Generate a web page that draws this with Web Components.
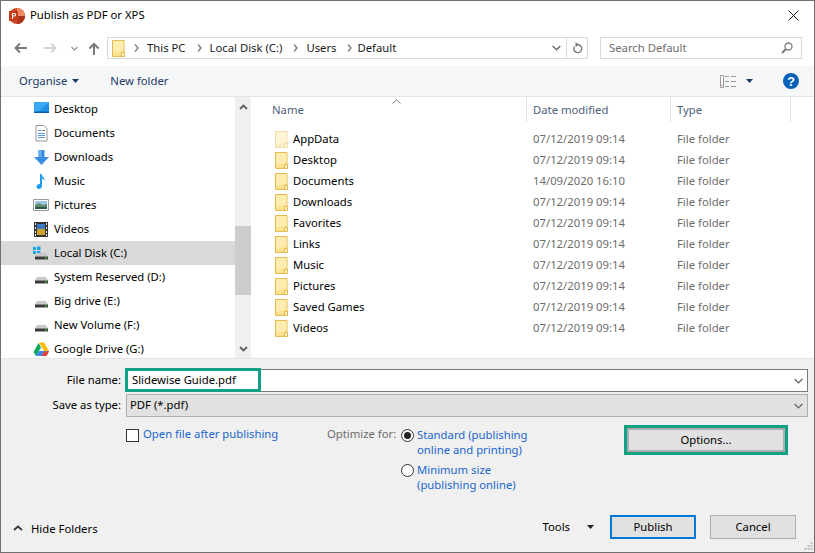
<!DOCTYPE html>
<html>
<head>
<meta charset="utf-8">
<title>Publish as PDF or XPS</title>
<style>
  html, body { margin: 0; padding: 0; background: #fff; }
  body { font: 11.3px "Noto Sans", "Liberation Sans", sans-serif; color: #000; }
</style>
</head>
<body>
<publish-dialog></publish-dialog>

<script>
// small folder used by the address bar and the file list
const folderIcon = (op = 1) => `
  <svg width="13" height="17" viewBox="0 0 13 17" style="opacity:${op}">
    <path d="M.5.500h11.500v15.900H.5z" fill="#fde28f" stroke="#e2b84f"/>
    <path d="M1 1h10.500v9.500L1 13z" fill="#ffedb0"/>
    <path d="M9.500 12.500h3v4h-3z" fill="#fff3c8" stroke="#e2b84f"/>
  </svg>`;

const driveBase = `
  <path d="M2 11.500 4 8h9l2 3.500z" fill="#c9c9c9"/>
  <path d="M2 11h13v3.500H2z" fill="#3a3a3a"/>
  <path d="M2 11h13v1H2z" fill="#8a8a8a"/>
  <path d="M12 12.500h2v1h-2z" fill="#5ee04a"/>`;

const treeIcons = {
  desktop: `<path d="M1 1h15v11H1z" fill="#1e90e8"/><path d="M1 1h15L4 12H1z" fill="#3aa8f2"/><path d="M1 10.500h15V12H1z" fill="#0a5da8"/>`,
  documents: `<path d="M3 .5h8l3 3v12.500H3z" fill="#fbfbfb" stroke="#9a9a9a"/><path d="M5 5h3v1H5zM5 8h7v1H5zM5 10h7v1H5zM5 12h7v1H5z" fill="#5a9bd5"/><path d="M9 5h3v1H9z" fill="#7a7a7a"/>`,
  downloads: `<path d="M5.500 1h6v7H16l-7.500 8L1 8h4.500z" fill="#3b8fe0"/><path d="M5.500 1h3v7h-3z" fill="#69aef0"/>`,
  music: `<path d="M7 1h1.600c.4 3 3.400 3.600 3.400 7-.8-1.600-2-2.300-3-2.500V13c0 1.800-1.600 3-3.200 3S3.500 15 3.500 13.500 5 11 6.500 11c.2 0 .4 0 .5.100z" fill="#1e9cf0"/>`,
  pictures: `<path d="M.5 2.500h15v11H.5z" fill="#fff" stroke="#9a9a9a"/><path d="M2 4h12v4H2z" fill="#9cc7e8"/><path d="M2 8l4-2 4 2 4-1v5H2z" fill="#5f8a6e"/><path d="M2 10h12v2H2z" fill="#2f5a48"/>`,
  videos: `<path d="M1 1h14v15H1z" fill="#333"/><path d="M4 3h8v11H4z" fill="#3f77c4"/><path d="M4 8h8v6H4z" fill="#c9a32e"/><path d="M2 2h1v2H2zM2 6h1v2H2zM2 10h1v2H2zM2 13h1v2H2zM13 2h1v2h-1zM13 6h1v2h-1zM13 10h1v2h-1zM13 13h1v2h-1z" fill="#eee"/>`,
  system: `<path d="M0 2h3v3H0zM4 1.500h3.500V5H4zM0 6h3v3H0zM4 6h3.500v3H4z" fill="#1fa4ea"/>${driveBase}`,
  drive: driveBase,
  gdrive: `<path d="M6 1.500h5l5 8.500h-5z" fill="#fbbc04"/><path d="M5.500 10H16l-2.500 5H3z" fill="#4285f4"/><path d="M.5 11 5.600 2 8 6.500 3 15z" fill="#0ea55c"/><path d="M13.500 15 16 10.500h-5L8.500 15z" fill="#ea4335"/>`
};

class PublishDialog extends HTMLElement {
  constructor() {
    super();
    this.attachShadow({ mode: 'open' });
  }
  connectedCallback() {
    this.shadowRoot.innerHTML = `
      <style>
        :host {
          display: flex;
          flex-direction: column;
          box-sizing: border-box;
          width: 815px;
          height: 553px;
          border: 1px solid #707070;
          background: #fff;
          overflow: hidden;
        }
        .main { display: flex; height: 261px; }
      </style>
      <dialog-title></dialog-title>
      <dialog-nav></dialog-nav>
      <dialog-toolbar></dialog-toolbar>
      <div class="main">
        <folder-tree></folder-tree>
        <file-list></file-list>
      </div>
      <publish-form></publish-form>
    `;
  }
}

class DialogTitle extends HTMLElement {
  constructor() {
    super();
    this.attachShadow({ mode: 'open' });
  }
  connectedCallback() {
    this.shadowRoot.innerHTML = `
      <style>
        :host { display: flex; align-items: center; height: 29px; padding: 0 15px 0 8px; }
        span { margin: 0 0 2px 5px; flex: 1; color: #000; }
        svg { display: block; }
      </style>
      <svg width="16" height="16" viewBox="0 0 16 16">
        <circle cx="8" cy="8" r="8" fill="#d2472a"/>
        <path d="M8 0a8 8 0 0 1 8 8H8z" fill="#ef8b65"/>
        <path d="M8 16a8 8 0 0 0 8-8H8z" fill="#a8321a"/>
        <path d="M0 3h9v10H0z" fill="#c43e1c"/>
        <path d="M3 5h2.400a1.700 1.700 0 0 1 0 3.400H4V11H3zM4 6v1.500h1.300a.75.75 0 0 0 0-1.500z" fill="#fff"/>
      </svg>
      <span>Publish as PDF or XPS</span>
      <svg width="11" height="11" viewBox="0 0 11 11"><path d="M.5.500l10 10M10.500.5l-10 10" stroke="#111" fill="none"/></svg>
    `;
  }
}

class DialogNav extends HTMLElement {
  constructor() {
    super();
    this.attachShadow({ mode: 'open' });
  }
  connectedCallback() {
    const sep = (cls = '') => `<svg class="sep ${cls}" width="5" height="8" viewBox="0 0 5 8"><path d="M1 .5 4 4 1 7.500" stroke="#808080" stroke-width="1.400" fill="none"/></svg>`;
    this.shadowRoot.innerHTML = `
      <style>
        :host { display: flex; align-items: center; height: 36px; padding-left: 13px; box-sizing: border-box; }
        svg { display: block; flex: none; }
        span { margin-bottom: 2px; }
        .fwd { margin-left: 17px; }
        .drop { margin-left: 14px; }
        .up { margin-left: 10px; }
        .addr {
          box-sizing: border-box;
          display: flex;
          align-items: center;
          margin-left: 7px;
          width: 481px;
          height: 22px;
          border: 1px solid #d9d9d9;
          padding-left: 4px;
          color: #1a1a1a;
        }
        .addr .sep { margin: 0 8px 0 11px; }
        .addr .sep.first { margin: 0 8px 0 9px; }
        .addr .sep.last { margin: 0 6px 0 10px; }
        .end { margin-left: auto; display: flex; align-items: center; height: 100%; }
        .end .chev { margin-right: 5px; }
        .end .refresh { border-left: 1px solid #d9d9d9; height: 100%; width: 20px; display: flex; align-items: center; justify-content: center; }
        .search {
          box-sizing: border-box;
          display: flex;
          align-items: center;
          justify-content: space-between;
          margin-left: 12px;
          width: 202px;
          height: 22px;
          border: 1px solid #d9d9d9;
          padding: 0 8px;
          color: #6d6d6d;
        }
      </style>
      <svg width="13" height="12" viewBox="0 0 13 12"><path d="M13 6H2M6 1.500 1.500 6 6 10.500" stroke="#7a7a7a" stroke-width="2" fill="none"/></svg>
      <svg class="fwd" width="13" height="12" viewBox="0 0 13 12"><path d="M0 6h11M7 1.500 11.500 6 7 10.500" stroke="#d4d4d4" stroke-width="2" fill="none"/></svg>
      <svg class="drop" width="7" height="5" viewBox="0 0 7 5"><path d="M.5 1 3.500 4 6.500 1" stroke="#9a9a9a" stroke-width="1.300" fill="none"/></svg>
      <svg class="up" width="12" height="13" viewBox="0 0 12 13"><path d="M6 13V2M1.500 6.500 6 2l4.500 4.500" stroke="#7a7a7a" stroke-width="2" fill="none"/></svg>
      <div class="addr">
        ${folderIcon()}
        ${sep('first')}
        <span>This PC</span>${sep()}
        <span>Local Disk (C:)</span>${sep()}
        <span>Users</span>${sep('last')}
        <span>Default</span>
        <div class="end">
          <svg class="chev" width="9" height="6" viewBox="0 0 9 6"><path d="M.7 1 4.500 4.800 8.300 1" stroke="#6a6a6a" stroke-width="1.500" fill="none"/></svg>
          <div class="refresh">
            <svg width="11" height="12" viewBox="0 0 11 12"><path d="M6.500 2.700A4 4 0 1 1 2.300 4.500" stroke="#7a7a7a" stroke-width="1.400" fill="none"/><path d="M3.500 0 7.500 2.700 3.500 5z" fill="#7a7a7a"/></svg>
          </div>
        </div>
      </div>
      <div class="search">
        <span>Search Default</span>
        <svg width="12" height="12" viewBox="0 0 12 12"><circle cx="7.500" cy="4.500" r="3.500" stroke="#7a7a7a" stroke-width="1.300" fill="none"/><path d="M5 7 1 11" stroke="#7a7a7a" stroke-width="2"/></svg>
      </div>
    `;
  }
}

class DialogToolbar extends HTMLElement {
  constructor() {
    super();
    this.attachShadow({ mode: 'open' });
  }
  connectedCallback() {
    this.shadowRoot.innerHTML = `
      <style>
        :host {
          display: flex;
          align-items: center;
          box-sizing: border-box;
          height: 31px;
          background: #f5f6f7;
          border-bottom: 1px solid #e5e5e5;
          padding-left: 18px;
          color: #1c3a66;
        }
        svg { display: block; flex: none; }
        span { margin-bottom: 2px; }
        .arrow { margin-left: 5px; }
        .newf { margin-left: 31px; }
        .view { margin-left: auto; }
        .varrow { margin-left: 10px; }
        .help { margin-left: 30px; margin-right: 15px; }
      </style>
      <span>Organise</span>
      <svg class="arrow" width="7" height="4" viewBox="0 0 7 4"><path d="M0 0h7L3.500 4z" fill="#1c3a66"/></svg>
      <span class="newf">New folder</span>
      <svg class="view" width="16" height="13" viewBox="0 0 16 13">
        <path d="M.5.500h3v12h-3z" fill="#fff" stroke="#9a9a9a"/>
        <path d="M1.500 10h1v1h-1z" fill="#d9483b"/>
        <path d="M5 1.500h4M11 1.500h5M5 6.500h4M11 6.500h5M5 11.500h4M11 11.500h5" stroke="#9a9a9a"/>
      </svg>
      <svg class="varrow" width="7" height="4" viewBox="0 0 7 4"><path d="M0 0h7L3.500 4z" fill="#1c3a66"/></svg>
      <svg class="help" width="16" height="16" viewBox="0 0 16 16">
        <circle cx="8" cy="8" r="8" fill="#0a62b8"/>
        <text x="8" y="12.500" text-anchor="middle" font-family="Liberation Sans, sans-serif" font-weight="700" font-size="12.500" fill="#fff">?</text>
      </svg>
    `;
  }
}

class TreeItem extends HTMLElement {
  constructor() {
    super();
    this.attachShadow({ mode: 'open' });
  }
  connectedCallback() {
    const icon = this.getAttribute('icon');
    this.shadowRoot.innerHTML = `
      <style>
        :host { display: flex; align-items: center; height: 24px; padding-left: 32px; color: #000; }
        :host([selected]) { background: #d9d9d9; }
        svg { display: block; margin-right: 4px; flex: none; }
        slot { display: block; margin-bottom: 2px; }
      </style>
      <svg width="17" height="17" viewBox="0 0 17 17">${treeIcons[icon]}</svg>
      <slot></slot>
    `;
  }
}

class FolderTree extends HTMLElement {
  constructor() {
    super();
    this.attachShadow({ mode: 'open' });
    this.items = [
      ['desktop', 'Desktop'], ['documents', 'Documents'], ['downloads', 'Downloads'],
      ['music', 'Music'], ['pictures', 'Pictures'], ['videos', 'Videos'],
      ['system', 'Local Disk (C:)', true], ['drive', 'System Reserved (D:)'],
      ['drive', 'Big drive (E:)'], ['drive', 'New Volume (F:)'], ['gdrive', 'Google Drive (G:)']
    ];
  }
  connectedCallback() {
    this.shadowRoot.innerHTML = `
      <style>
        :host { display: flex; flex: none; width: 251px; height: 261px; overflow: hidden; }
        .rows { width: 234px; flex: none; overflow: hidden; }
        .bar {
          width: 16px;
          flex: none;
          background: #f0f0f0;
          display: flex;
          flex-direction: column;
          align-items: center;
        }
        .bar svg { display: block; flex: none; }
        .top { margin-top: 7px; }
        .thumb { align-self: stretch; height: 69px; margin-top: 116px; background: #cdcdcd; }
        .bottom { margin-top: 51px; }
      </style>
      <div class="rows">
        ${this.items.map(([icon, label, sel]) => `<tree-item icon="${icon}" ${sel ? 'selected' : ''}>${label}</tree-item>`).join('')}
      </div>
      <div class="bar">
        <svg class="top" width="9" height="6" viewBox="0 0 9 6"><path d="M1 5 4.500 1.500 8 5" stroke="#606060" stroke-width="1.800" fill="none"/></svg>
        <div class="thumb"></div>
        <svg class="bottom" width="9" height="6" viewBox="0 0 9 6"><path d="M1 1 4.500 4.500 8 1" stroke="#606060" stroke-width="1.800" fill="none"/></svg>
      </div>
    `;
  }
}

class FileList extends HTMLElement {
  constructor() {
    super();
    this.attachShadow({ mode: 'open' });
    this.files = [
      ['AppData', '07/12/2019 09:14', true], ['Desktop', '07/12/2019 09:14'],
      ['Documents', '14/09/2020 16:10'], ['Downloads', '07/12/2019 09:14'],
      ['Favorites', '07/12/2019 09:14'], ['Links', '07/12/2019 09:14'],
      ['Music', '07/12/2019 09:14'], ['Pictures', '07/12/2019 09:14'],
      ['Saved Games', '07/12/2019 09:14'], ['Videos', '07/12/2019 09:14']
    ];
  }
  connectedCallback() {
    this.shadowRoot.innerHTML = `
      <style>
        :host { display: block; flex: 1; position: relative; min-width: 0; }
        .cols { display: grid; grid-template-columns: 275px 144px 120px; }
        .head { height: 25px; color: #4c607a; }
        .head > div { height: 25px; padding-top: 5px; box-sizing: border-box; border-right: 1px solid #e5e5e5; padding-left: 20px; }
        .head > div + div { padding-left: 6px; }
        .sort { position: absolute; left: 140px; top: 2px; display: block; }
        .list { padding-top: 7px; }
        .row { height: 21px; align-items: center; color: #6d6d6d; }
        .row > div { display: flex; align-items: center; padding-left: 6px; }
        .row > div:first-child { padding-left: 23px; color: #000; }
        .row span { margin-bottom: 2px; }
        .row svg { display: block; margin-right: 5px; flex: none; }
      </style>
      <svg class="sort" width="9" height="5" viewBox="0 0 9 5"><path d="M.5 4.500 4.500.8 8.500 4.500" stroke="#808080" fill="none"/></svg>
      <div class="cols head"><div>Name</div><div>Date modified</div><div>Type</div></div>
      <div class="list">
        ${this.files.map(([name, date, dim]) => `
          <div class="cols row">
            <div>${folderIcon(dim ? 0.5 : 1)}<span>${name}</span></div>
            <div><span>${date}</span></div>
            <div><span>File folder</span></div>
          </div>`).join('')}
      </div>
    `;
  }
}

class DialogButton extends HTMLElement {
  constructor() {
    super();
    this.attachShadow({ mode: 'open' });
  }
  connectedCallback() {
    this.shadowRoot.innerHTML = `
      <style>
        :host {
          display: flex;
          align-items: center;
          justify-content: center;
          box-sizing: border-box;
          background: #e1e1e1;
          border: 1px solid #adadad;
          color: #000;
        }
        :host([primary]) { border: 2px solid #0078d7; }
        slot { display: block; margin-bottom: 2px; }
      </style>
      <slot></slot>
    `;
  }
}

class PublishForm extends HTMLElement {
  constructor() {
    super();
    this.attachShadow({ mode: 'open' });
  }
  connectedCallback() {
    const chev = `<svg width="9" height="6" viewBox="0 0 9 6"><path d="M.7 1 4.500 4.800 8.300 1" stroke="#606060" stroke-width="1.200" fill="none"/></svg>`;
    this.shadowRoot.innerHTML = `
      <style>
        :host {
          display: flex;
          flex-direction: column;
          flex: 1;
          position: relative;
          background: #f0f0f0;
          border-top: 1px solid #e5e5e5;
          padding-top: 10px;
          min-height: 0;
        }
        svg { display: block; flex: none; }
        .fields { display: grid; grid-template-columns: 120px 682px; column-gap: 5px; row-gap: 2px; align-items: center; }
        .fields label { text-align: right; color: #000; margin-bottom: 2px; }
        .field {
          box-sizing: border-box;
          display: flex;
          align-items: center;
          justify-content: space-between;
          height: 23px;
          padding: 0 4px 0 5px;
          border: 1px solid #7a7a7a;
          background: #fff;
          color: #000;
        }
        .field span { margin-bottom: 2px; }
        .field.sel { background: #e1e1e1; border-color: #adadad; padding-left: 3px; }
        .mark {
          position: absolute;
          left: 124px;
          top: 9px;
          width: 136px;
          height: 24px;
          box-sizing: border-box;
          border: 3px solid #0fa184;
        }
        .opts {
          display: grid;
          grid-template-columns: 201px 74px 223px 164px;
          margin: 8px 0 0 125px;
        }
        .check { display: flex; align-items: flex-start; padding-top: 1px; color: #1a66cc; }
        .box { width: 13px; height: 13px; box-sizing: border-box; border: 1px solid #333; background: #fff; margin: 3px 4px 0 0; flex: none; }
        .label { color: #6d6d6d; padding-top: 1px; }
        .radios { display: flex; flex-direction: column; gap: 5px; padding-top: 2px; color: #1a66cc; line-height: 15px; }
        .radio { display: flex; align-items: flex-start; }
        .dot { margin: 2px 3px 0 0; }
        .hilite { box-sizing: border-box; height: 30px; border: 3px solid #0fa184; }
        .hilite dialog-button { height: 24px; border-width: 2px; }
        .foot { display: flex; align-items: center; margin-top: auto; margin-bottom: 13px; height: 24px; padding: 0 18px 0 12px; }
        .hide { display: flex; align-items: center; padding-top: 2px; }
        .hide span { margin-left: 8px; }
        .tools { display: flex; align-items: center; margin-left: auto; }
        .tools span { margin-bottom: 2px; }
        .tools svg { margin: 0 16px 0 17px; }
        .foot dialog-button { width: 86px; height: 24px; }
        .foot dialog-button + dialog-button { margin-left: 14px; }
        .grip { position: absolute; right: 1px; bottom: 1px; }
      </style>
      <div class="fields">
        <label>File name:</label>
        <div class="field"><span>Slidewise Guide.pdf</span>${chev}</div>
        <label>Save as type:</label>
        <div class="field sel"><span>PDF (*.pdf)</span>${chev}</div>
      </div>
      <div class="mark"></div>
      <div class="opts">
        <div class="check"><div class="box"></div><span>Open file after publishing</span></div>
        <div class="label">Optimize for:</div>
        <div class="radios">
          <div class="radio">
            <svg class="dot" width="13" height="13" viewBox="0 0 13 13"><circle cx="6.500" cy="6.500" r="6" fill="#fff" stroke="#333"/><circle cx="6.500" cy="6.500" r="3.500" fill="#222"/></svg>
            <span>Standard (publishing<br>online and printing)</span>
          </div>
          <div class="radio">
            <svg class="dot" width="13" height="13" viewBox="0 0 13 13"><circle cx="6.500" cy="6.500" r="6" fill="#fff" stroke="#333"/></svg>
            <span>Minimum size<br>(publishing online)</span>
          </div>
        </div>
        <div class="hilite"><dialog-button>Options...</dialog-button></div>
      </div>
      <div class="foot">
        <div class="hide">
          <svg width="10" height="6" viewBox="0 0 10 6"><path d="M1 5 5 1.500 9 5" stroke="#333" stroke-width="1.700" fill="none"/></svg>
          <span>Hide Folders</span>
        </div>
        <div class="tools">
          <span>Tools</span>
          <svg width="7" height="4" viewBox="0 0 7 4"><path d="M0 0h7L3.500 4z" fill="#222"/></svg>
        </div>
        <dialog-button primary>Publish</dialog-button>
        <dialog-button>Cancel</dialog-button>
      </div>
      <svg class="grip" width="9" height="9" viewBox="0 0 9 9"><path d="M6.500 0h2v2h-2zM3.500 3h2v2h-2zM6.500 3h2v2h-2zM.5 6h2v2h-2zM3.500 6h2v2h-2zM6.500 6h2v2h-2z" fill="#bdbdbd"/></svg>
    `;
  }
}

customElements.define('tree-item', TreeItem);
customElements.define('folder-tree', FolderTree);
customElements.define('file-list', FileList);
customElements.define('dialog-title', DialogTitle);
customElements.define('dialog-nav', DialogNav);
customElements.define('dialog-toolbar', DialogToolbar);
customElements.define('dialog-button', DialogButton);
customElements.define('publish-form', PublishForm);
customElements.define('publish-dialog', PublishDialog);
</script>
</body>
</html>
